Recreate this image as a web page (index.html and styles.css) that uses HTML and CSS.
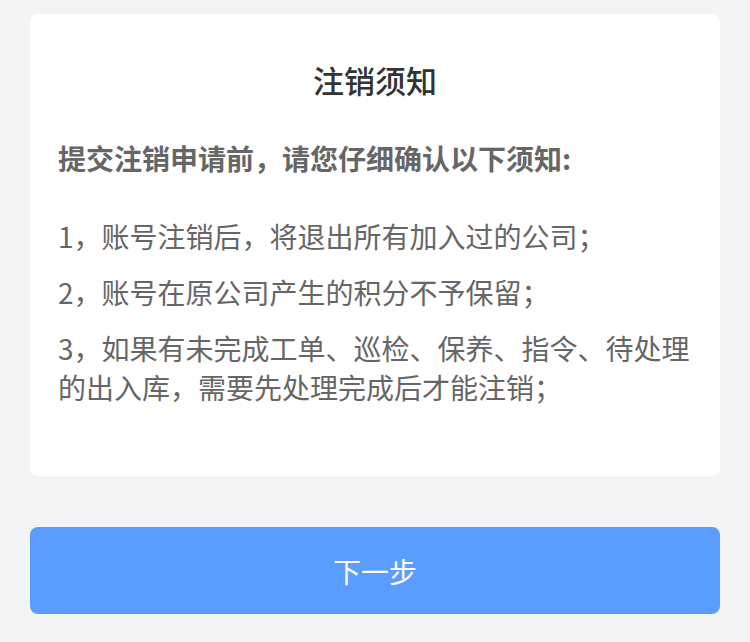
FILE: index.html
```html
<!DOCTYPE html>
<html lang="zh-CN">
  <head>
    <meta charset="UTF-8" />
    <meta name="viewport" content="width=device-width, initial-scale=1.0" />
    <title>注销须知</title>
    <link rel="stylesheet" href="styles.css">
  </head>
  <body>
    <div class="page">
      <div class="card">
        <h1 class="card-title">注销须知</h1>
        <p class="card-lead">提交注销申请前，请您仔细确认以下须知:</p>
        <ul class="notice-list">
          <li>1，账号注销后，将退出所有加入过的公司；</li>
          <li>2，账号在原公司产生的积分不予保留；</li>
          <li>3，如果有未完成工单、巡检、保养、指令、待处理的出入库，需要先处理完成后才能注销；</li>
        </ul>
      </div>

      <button class="next-btn" type="button">下一步</button>
    </div>
  </body>
</html>
```

FILE: styles.css
```css
/* Basic styles */
body {
  font-family: "Noto Sans CJK SC", "Noto Sans", sans-serif;
  background-color: #f4f4f4;
  margin: 0;
}

.page {
  padding: 14px 30px 0;
}

.card {
  background-color: #ffffff;
  border-radius: 8px;
  padding: 45px 28px 69px;
}

.card-title {
  margin: 0;
  font-size: 31px;
  line-height: 42px;
  font-weight: 500;
  color: #333;
  text-align: center;
}

.card-lead {
  margin: 37px 0 0;
  font-size: 28px;
  line-height: 40px;
  font-weight: bold;
  color: #666;
}

.notice-list {
  list-style: none;
  margin: 39px 0 0;
  padding: 0;
}

.notice-list li {
  font-size: 28px;
  line-height: 39px;
  color: #666;
  margin-top: 17px;
}

.notice-list li:first-child {
  margin-top: 0;
}

.next-btn {
  display: block;
  width: 100%;
  height: 87px;
  margin-top: 51px;
  border: none;
  border-radius: 8px;
  background-color: #5b9cff;
  color: #fff;
  font-family: inherit;
  font-size: 28px;
  cursor: pointer;
}
```
